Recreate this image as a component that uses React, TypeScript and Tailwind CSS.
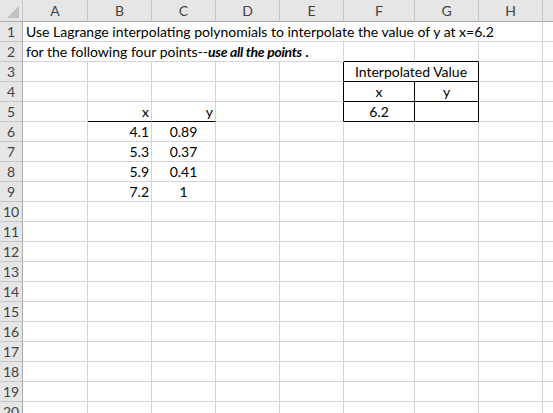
import React from "react";

type CellDef = {
  text?: React.ReactNode;
  span?: number;
  align?: "left" | "center" | "right";
  rb?: boolean; // black right border
  bb?: boolean; // black bottom border
};

const COLS = ["A", "B", "C", "D", "E", "F", "G", "H", ""];

const blank = (n: number): CellDef[] => Array.from({ length: n }, () => ({}));

// each row covers A..H plus the cut-off column at the right edge
const ROWS: CellDef[][] = [
  [
    { text: "Use Lagrange interpolating polynomials to interpolate the value of y at x=6.2", span: 8 },
    {},
  ],
  [
    {
      text: (
        <>
          for the following four points--
          <span className="font-bold italic tracking-[-0.3px]">use all the points</span>
          <span className="font-bold"> .</span>
        </>
      ),
      span: 5,
    },
    { bb: true },
    { bb: true },
    {},
    {},
  ],
  [...blank(4), { rb: true }, { text: "Interpolated Value", span: 2, align: "center", rb: true, bb: true }, {}, {}],
  [...blank(4), { rb: true }, { text: "x", align: "center", rb: true, bb: true }, { text: "y", align: "center", rb: true, bb: true }, {}, {}],
  [
    {},
    { text: "x", align: "right", bb: true },
    { text: "y", align: "right", bb: true },
    {},
    { rb: true },
    { text: "6.2", align: "center", rb: true, bb: true },
    { rb: true, bb: true },
    {},
    {},
  ],
  [{}, { text: "4.1", align: "right" }, { text: "0.89", align: "center" }, ...blank(6)],
  [{}, { text: "5.3", align: "right" }, { text: "0.37", align: "center" }, ...blank(6)],
  [{}, { text: "5.9", align: "right" }, { text: "0.41", align: "center" }, ...blank(6)],
  [{}, { text: "7.2", align: "right" }, { text: "1", align: "center" }, ...blank(6)],
  ...Array.from({ length: 11 }, () => blank(9)),
];

function Cell({ c, last }: { c: CellDef; last: boolean }) {
  const alignCls =
    c.align === "right" ? "justify-end pr-[2px]" : c.align === "center" ? "justify-center" : "justify-start pl-[3px]";
  const spanCls =
    c.span === 8 ? "col-span-8" : c.span === 5 ? "col-span-5" : c.span === 2 ? "col-span-2" : "";
  return (
    <div
      className={`flex h-5 items-end overflow-visible whitespace-nowrap border-b ${last ? "" : "border-r"} ${
        c.rb ? "border-r-black" : "border-r-[#d4d4d4]"
      } ${c.bb ? "border-b-black" : "border-b-[#d4d4d4]"} ${alignCls} ${spanCls}`}
    >
      <span className="leading-[19px]">{c.text}</span>
    </div>
  );
}

export default function App() {
  return (
    <div className="h-[413px] w-[553px] overflow-hidden bg-white font-['Lato',sans-serif] text-[14px] text-black">
      <div className="grid grid-cols-[23px_65px_64px_64px_64px_64px_71px_64px_64px_1fr]">
        {/* corner */}
        <div className="relative h-[22px] border-b border-r border-b-[#ababab] border-r-[#c6c6c6] bg-[#e6e6e6]">
          <svg className="absolute right-[3px] bottom-[3px]" width="12" height="12" viewBox="0 0 12 12">
            <polygon points="12,0 12,12 0,12" fill="#c1c1c1" />
          </svg>
        </div>
        {COLS.map((l, i) => (
          <div
            key={l + i}
            className={`flex h-[22px] items-center justify-center border-b border-b-[#ababab] bg-[#e6e6e6] text-[#444] ${
              i < COLS.length - 1 ? "border-r border-r-[#c6c6c6]" : ""
            }`}
          >
            {l}
          </div>
        ))}
        {ROWS.map((row, r) => (
          <React.Fragment key={r}>
            <div className="flex h-5 items-end justify-center border-b border-r border-b-[#c6c6c6] border-r-[#ababab] bg-[#e6e6e6] text-[#444]">
              <span className="leading-[19px]">{r + 1}</span>
            </div>
            {row.map((c, i) => (
              <Cell key={i} c={c} last={i === row.length - 1} />
            ))}
          </React.Fragment>
        ))}
      </div>
    </div>
  );
}
